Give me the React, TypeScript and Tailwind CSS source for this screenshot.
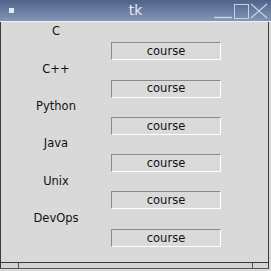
const courses = ["C", "C++", "Python", "Java", "Unix", "DevOps"];

const App = () => {
  return (
    <div className="w-[271px] h-[271px] bg-[#d9d9d9] flex flex-col overflow-hidden font-['DejaVu_Sans',sans-serif]">
      {/* title bar */}
      <div className="h-[21px] shrink-0 relative bg-gradient-to-b from-[#4f628a] to-[#8396b8] flex items-center justify-center">
        <div className="absolute left-[9px] top-[8px] w-[5px] h-[5px] bg-[#e4e8f2]" />
        <span className="text-[14px] leading-none text-[#e6eaf4] mt-[-2px]">tk</span>
        <div className="absolute right-[3px] top-[3px] flex items-end gap-[1px]">
          <svg width="20" height="16" viewBox="0 0 20 16">
            <line x1="1" y1="14.5" x2="19" y2="14.5" stroke="#c8d0e2" strokeWidth="1.5" />
          </svg>
          <svg width="15" height="15" viewBox="0 0 15 15">
            <rect x="0.5" y="0.5" width="14" height="14" fill="none" stroke="#c8d0e2" strokeWidth="1" />
          </svg>
          <svg width="18" height="16" viewBox="0 0 18 16">
            <line x1="1" y1="1" x2="17" y2="15" stroke="#c8d0e2" strokeWidth="1.2" />
            <line x1="17" y1="1" x2="1" y2="15" stroke="#c8d0e2" strokeWidth="1.2" />
          </svg>
        </div>
      </div>

      {/* body */}
      <div className="h-[241px] shrink-0 flex border-t border-[#eef0f4]">
        <div className="w-px bg-[#3a3a3a]" />
        <div className="flex-1 flex flex-col pt-[1px]">
          {courses.map((name) => (
            <div key={name} className="flex flex-col">
              <div className="h-[18px] w-[110px] flex items-center justify-center text-[11.5px] text-[#111]">
                {name}
              </div>
              <div className="h-[19.3px] flex items-end">
                <div className="ml-[110px] w-[110px] h-[18px] border border-t-[#8a8a8a] border-l-[#8a8a8a] border-b-white border-r-white bg-[#dadada] flex items-center justify-center pt-[1px] text-[11.5px] text-[#111]">
                  course
                </div>
              </div>
            </div>
          ))}
        </div>
        <div className="w-px bg-[#3a3a3a]" />
        <div className="w-[2px] bg-[#d9d9d9]" />
      </div>

      {/* bottom frame */}
      <div className="h-px shrink-0 bg-[#3a3a3a] mr-[2px]" />
      <div className="h-[5px] shrink-0 flex mr-[2px] bg-[#d4d4d4]">
        <div className="w-px bg-[#3a3a3a]" />
        <div className="w-[17px]" />
        <div className="w-px bg-[#555]" />
        <div className="flex-1" />
        <div className="w-px bg-[#555]" />
        <div className="w-[15px]" />
        <div className="w-px bg-[#3a3a3a]" />
      </div>
      <div className="h-px shrink-0 bg-[#555] mr-[2px]" />
    </div>
  );
};

export default App;
